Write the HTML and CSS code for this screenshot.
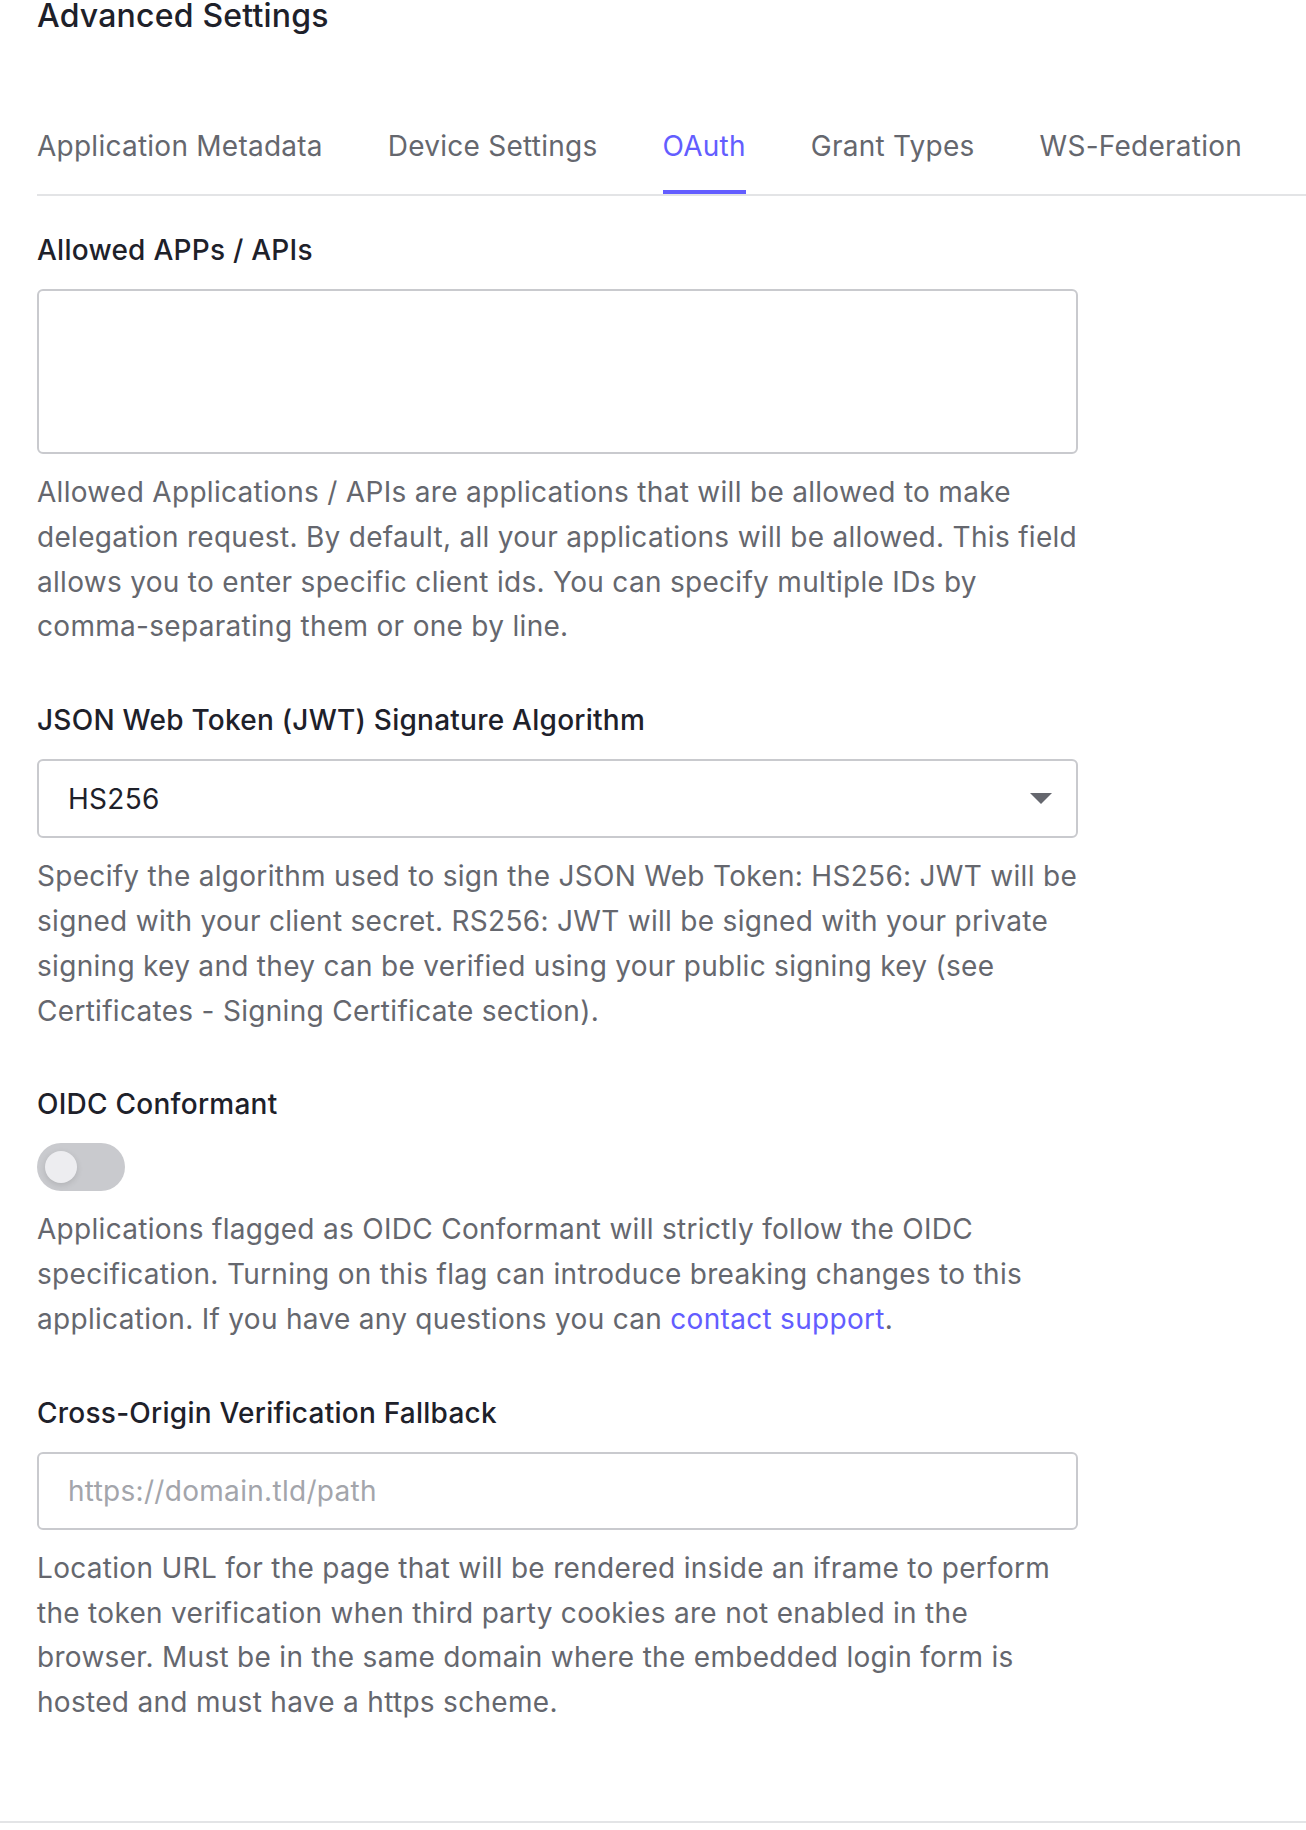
FILE: index.html
```html
<!DOCTYPE html>
<html lang="en">
<head>
<meta charset="utf-8">
<title>Advanced Settings</title>
<link rel="stylesheet" href="styles.css">
</head>
<body>
<div class="page">
  <h2 class="title">Advanced Settings</h2>
  <nav class="tabs">
    <a class="tab">Application Metadata</a>
    <a class="tab">Device Settings</a>
    <a class="tab tab-active">OAuth</a>
    <a class="tab">Grant Types</a>
    <a class="tab">WS-Federation</a>
  </nav>
  <div class="panel">
    <div class="field">
      <label class="label">Allowed APPs / APIs</label>
      <textarea class="control textarea"></textarea>
      <p class="help">Allowed Applications / APIs are applications that will be allowed to make delegation request. By default, all your applications will be allowed. This field allows you to enter specific client ids. You can specify multiple IDs by <span class="nowrap">comma-separating</span> them or one by line.</p>
    </div>
    <div class="field">
      <label class="label">JSON Web Token (JWT) Signature Algorithm</label>
      <div class="select-wrap">
        <select class="control select">
          <option>HS256</option>
          <option>RS256</option>
        </select>
        <svg class="select-caret" width="22" height="11" viewBox="0 0 22 11"><path d="M0 0H22L11 11Z" fill="#65676e"/></svg>
      </div>
      <p class="help">Specify the algorithm used to sign the JSON Web Token: HS256: JWT will be signed with your client secret. RS256: JWT will be signed with your private signing key and they can be verified using your public signing key (see Certificates - Signing Certificate section).</p>
    </div>
    <div class="field">
      <label class="label">OIDC Conformant</label>
      <div class="toggle"><span class="toggle-knob"></span></div>
      <p class="help">Applications flagged as OIDC Conformant will strictly follow the OIDC specification. Turning on this flag can introduce breaking changes to this application. If you have any questions you can <a class="link">contact support</a>.</p>
    </div>
    <div class="field">
      <label class="label">Cross-Origin Verification Fallback</label>
      <input class="control input" type="text" placeholder="https://domain.tld/path">
      <p class="help">Location URL for the page that will be rendered inside an iframe to perform the token verification when third party cookies are not enabled in the browser. Must be in the same domain where the embedded login form is hosted and must have a https scheme.</p>
    </div>
  </div>
</div>
<div class="footer-line"></div>
</body>
</html>
```
FILE: styles.css
```css
* { box-sizing: border-box; }
html, body { margin: 0; padding: 0; background: #ffffff; }
body {
  font-family: "Inter", "Noto Sans", sans-serif;
  color: #1e212a;
  letter-spacing: 0.3px;
  overflow: hidden;
}
.page {
  padding-left: 37px;
}
.title {
  margin: -3px 0 0 0;
  font-size: 32px;
  line-height: 38px;
  font-weight: 500;
  letter-spacing: 0.2px;
  color: #1e212a;
}
.tabs {
  display: flex;
  gap: 65px;
  margin-top: 94px;
  border-bottom: 2px solid #e3e4e6;
}
.tab {
  display: block;
  font-size: 28px;
  line-height: 34px;
  letter-spacing: 0.25px;
  color: #65676e;
  padding-bottom: 27px;
  border-bottom: 4px solid transparent;
  white-space: nowrap;
  cursor: pointer;
}
.tab-active {
  color: #635dff;
  border-bottom-color: #635dff;
}
.panel {
  width: 1041px;
  padding-top: 37px;
  display: flex;
  flex-direction: column;
  gap: 54px;
}
.field {
  display: flex;
  flex-direction: column;
}
.label {
  font-size: 28px;
  line-height: 34px;
  font-weight: 500;
  letter-spacing: 0.25px;
  color: #1e212a;
  margin-bottom: 22px;
}
.control {
  width: 100%;
  border: 2px solid #c9cace;
  border-radius: 6px;
  background: #ffffff;
  font-family: "Inter", "Noto Sans", sans-serif;
  font-size: 28px;
  letter-spacing: 0.3px;
  color: #1e212a;
  outline: none;
}
.textarea {
  height: 165px;
  resize: none;
  display: block;
}
.select-wrap {
  position: relative;
}
.select {
  display: block;
  height: 79px;
  padding: 0 60px 0 29px;
  appearance: none;
  -webkit-appearance: none;
}
.select-caret {
  position: absolute;
  right: 26px;
  top: 34px;
}
.input {
  display: block;
  height: 78px;
  padding: 0 29px;
}
.input::placeholder {
  color: #a3a5ab;
}
.toggle {
  width: 88px;
  height: 48px;
  border-radius: 24px;
  background: #c9cace;
  padding: 8px;
}
.toggle-knob {
  display: block;
  width: 32px;
  height: 32px;
  border-radius: 50%;
  background: #ededf0;
  box-shadow: 0 2px 6px rgba(0, 0, 0, 0.12);
}
.help {
  margin: 16px 0 0 0;
  font-size: 28px;
  line-height: 44.8px;
  color: #65676e;
}
.nowrap {
  white-space: nowrap;
}
.link {
  color: #635dff;
  text-decoration: none;
  cursor: pointer;
}
.footer-line {
  margin-top: 96px;
  border-top: 2px solid #e3e4e6;
  height: 40px;
}
```
